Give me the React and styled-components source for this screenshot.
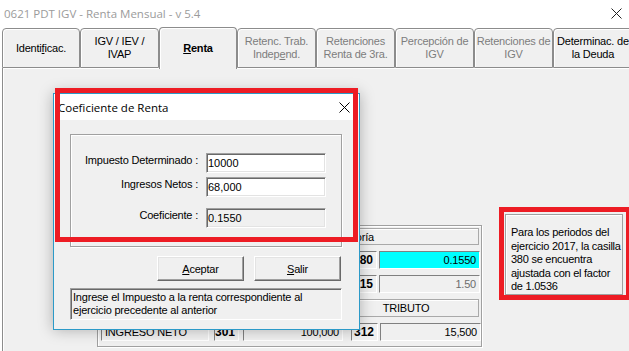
import styled, { createGlobalStyle } from 'styled-components';

const GlobalStyle = createGlobalStyle`
  html, body {
    margin: 0;
    padding: 0;
    background: #f0f0f0;
  }
  body {
    font-family: "Liberation Sans", Arial, sans-serif;
    font-size: 11px;
    letter-spacing: -0.2px;
    color: #000;
  }
`;

const tabs = [
  { w: 78, label: <>Identi<u>f</u>icac.</> },
  { w: 79, label: <>IGV / IEV /<br />IVAP</> },
  { w: 78, label: <><u>R</u>enta</>, active: true },
  { w: 79, label: <>Retenc. Trab.<br />Indep<u>e</u>nd.</>, disabled: true },
  { w: 79, label: <>Retenciones<br />Renta de 3ra.</>, disabled: true },
  { w: 79, label: <>Percepción de<br />IGV</>, disabled: true },
  { w: 79, label: <>Retenciones de<br />IGV</>, disabled: true },
  { w: 80, label: <>Determinac. de<br />la Deuda</> },
];

const infoLines = [
  'Para los periodos del',
  'ejercicio 2017, la casilla',
  '380 se encuentra',
  'ajustada con el factor',
  'de 1.0536',
];

function CloseGlyph({ color = '#000' }) {
  return (
    <svg width="11" height="11" viewBox="0 0 11 11" aria-hidden="true">
      <path d="M0.5 0.5 L10.5 10.5 M10.5 0.5 L0.5 10.5" stroke={color} strokeWidth="1" fill="none" />
    </svg>
  );
}

export default function App() {
  return (
    <>
      <GlobalStyle />
      <Window>
        <TitleBar>
          <span>0621 PDT IGV - Renta Mensual - v 5.4</span>
          <CloseGlyph color="#222" />
        </TitleBar>

        <TabStrip>
          {tabs.map((t, i) => (
            <Tab key={i} $w={t.w} $active={t.active} $disabled={t.disabled}>
              <span>{t.label}</span>
            </Tab>
          ))}
        </TabStrip>

        <TabPanel>
          <DataPanel>
            <Row $h={17}>
              <Cell $kind="head" $w={378} $ml={3} $pr={104}>Renta de Tercera Categoría</Cell>
            </Row>
            <Row $h={18}>
              <Cell $kind="label" $w={247} $ml={3} />
              <Cell $kind="code" $w={27} $ml={2}>380</Cell>
              <Cell $kind="value" $w={101} $ml={2} $bg="#00ffff">0.1550</Cell>
            </Row>
            <Row $h={18}>
              <Cell $kind="label" $w={247} $ml={3} />
              <Cell $kind="code" $w={27} $ml={2}>315</Cell>
              <Cell $kind="value" $w={101} $ml={2} $muted>1.50</Cell>
            </Row>
            <Row $h={18}>
              <Cell $kind="head" $w={240} $ml={3} />
              <Cell $kind="head" $w={129} $ml={9} $center>TRIBUTO</Cell>
            </Row>
            <Row $h={18}>
              <Cell $kind="label" $w={108} $ml={3}>INGRESO NETO</Cell>
              <Cell $kind="code" $w={25} $ml={5}>301</Cell>
              <Cell $kind="value" $w={100} $ml={4}>100,000</Cell>
              <Cell $kind="code" $w={27} $ml={8}>312</Cell>
              <Cell $kind="value" $w={101} $ml={2}>15,500</Cell>
            </Row>
          </DataPanel>

          <InfoBox>
            {infoLines.map((line) => (
              <div key={line}>{line}</div>
            ))}
          </InfoBox>
        </TabPanel>

        <Dialog>
          <DialogTitle>
            <span>Coeficiente de Renta</span>
            <CloseGlyph />
          </DialogTitle>
          <DialogBody>
            <GroupBox>
              <FieldLabel $raise>Impuesto Determinado :</FieldLabel>
              <TextBox readOnly value="10000" />
              <FieldLabel $raise>Ingresos Netos :</FieldLabel>
              <TextBox readOnly value="68,000" />
              <FieldLabel $gap>Coeficiente :</FieldLabel>
              <TextBox readOnly disabled $gap value="0.1550" />
            </GroupBox>
            <ButtonRow>
              <Button><u>A</u>ceptar</Button>
              <Button><u>S</u>alir</Button>
            </ButtonRow>
            <MessageBox>
              Ingrese el Impuesto a la renta correspondiente al ejercicio precedente al anterior
            </MessageBox>
          </DialogBody>
        </Dialog>

        <Highlight $x={55} $y={88} $w={303} $h={154} />
        <Highlight $x={499} $y={207} $w={132} $h={93} />
      </Window>
    </>
  );
}

const Window = styled.div`
  position: relative;
  width: 629px;
  height: 351px;
  overflow: hidden;
  background: #fff;
  display: flex;
  flex-direction: column;
`;

const TitleBar = styled.header`
  flex: 0 0 27px;
  display: flex;
  align-items: center;
  justify-content: space-between;
  padding: 0 7px 0 4px;
  font-family: "Open Sans", "Liberation Sans", sans-serif;
  font-size: 11.5px;
  letter-spacing: 0;
  color: #9b9b9b;
`;

const TabStrip = styled.nav`
  flex: 0 0 41px;
  display: flex;
  align-items: flex-end;
  padding-left: 2px;
  background: #fff;
  position: relative;
  z-index: 1;
`;

const Tab = styled.div`
  flex: 0 0 ${(p) => p.$w}px;
  box-sizing: border-box;
  height: ${(p) => (p.$active ? 42 : 40)}px;
  margin-bottom: ${(p) => (p.$active ? -1 : 0)}px;
  border: 1px solid #8c8c8c;
  border-bottom: ${(p) => (p.$active ? 'none' : '1px solid #8c8c8c')};
  border-radius: 4px 4px 0 0;
  background: #f0f0f0;
  box-shadow: inset 1px 1px #fff;
  display: flex;
  align-items: center;
  justify-content: center;
  text-align: center;
  white-space: nowrap;
  overflow: hidden;
  line-height: 13px;
  font-weight: ${(p) => (p.$active ? 700 : 400)};
  color: ${(p) => (p.$disabled ? '#7d7d7d' : '#000')};
`;

const TabPanel = styled.main`
  flex: 1;
  margin-left: 2px;
  border-left: 1px solid #8c8c8c;
  box-shadow: inset 1px 1px #fff;
  background: #f0f0f0;
  display: flex;
  align-items: flex-start;
`;

const DataPanel = styled.section`
  box-sizing: border-box;
  width: 385px;
  height: 122px;
  margin: 157px 0 0 94px;
  padding-top: 2px;
  border: 1px solid #a0a0a0;
  box-shadow: inset 1px 1px #fff, 1px 1px #fff;
  display: flex;
  flex-direction: column;
  gap: 6px;
`;

const Row = styled.div`
  display: flex;
  height: ${(p) => p.$h}px;
`;

const alignFor = (p) => {
  if (p.$center) return 'center';
  if (p.$kind === 'head') return p.$pr ? 'flex-end' : 'center';
  if (p.$kind === 'label') return 'flex-start';
  return 'flex-end';
};

const Cell = styled.div`
  box-sizing: border-box;
  width: ${(p) => p.$w}px;
  margin-left: ${(p) => p.$ml || 0}px;
  height: 100%;
  display: flex;
  align-items: center;
  justify-content: ${alignFor};
  overflow: hidden;
  white-space: nowrap;
  padding: 0 ${(p) => p.$pr ?? (p.$center ? 20 : 3)}px 0 3px;
  border: 1px solid;
  border-color: ${(p) => (p.$kind === 'head' ? '#a9a9a9' : '#808080 #fff #fff #808080')};
  box-shadow: ${(p) => (p.$kind === 'head' ? 'inset 1px 1px #fff' : 'none')};
  background: ${(p) => p.$bg || 'transparent'};
  color: ${(p) => (p.$muted ? '#6d6d6d' : '#000')};
  font-weight: ${(p) => (p.$kind === 'code' ? 700 : 400)};
  font-size: ${(p) => (p.$kind === 'code' ? 12 : 11)}px;
  letter-spacing: ${(p) => (p.$kind === 'code' ? 0 : -0.2)}px;
`;

const InfoBox = styled.aside`
  box-sizing: border-box;
  width: 118px;
  height: 81px;
  margin: 146px 0 0 23px;
  padding: 11px 0 0 5px;
  border: 1px solid #a0a0a0;
  box-shadow: inset 1px 1px #fff;
  line-height: 13.5px;
  white-space: nowrap;
  letter-spacing: -0.25px;
`;

const Dialog = styled.div`
  position: absolute;
  left: 53px;
  top: 93px;
  width: 307px;
  height: 237px;
  box-sizing: border-box;
  border: 1px solid #2b9ac8;
  background: #f0f0f0;
  box-shadow: 0 0 14px rgba(0, 0, 0, 0.28);
  display: flex;
  flex-direction: column;
  z-index: 2;
`;

const DialogTitle = styled.div`
  flex: 0 0 26px;
  background: #fff;
  display: flex;
  align-items: center;
  justify-content: space-between;
  padding: 0 9px 0 4px;
  font-family: "Open Sans", "Liberation Sans", sans-serif;
  font-size: 11.5px;
  letter-spacing: 0;
`;

const DialogBody = styled.div`
  flex: 1;
  padding: 14px 16px 0 16px;
  display: flex;
  flex-direction: column;
`;

const GroupBox = styled.fieldset`
  box-sizing: border-box;
  margin: 0;
  width: 272px;
  height: 113px;
  padding: 18px 0 0 0;
  border: 1px solid #a0a0a0;
  box-shadow: inset 1px 1px #fff, 1px 1px #fff;
  display: grid;
  grid-template-columns: 130px 120px;
  grid-auto-rows: 20px;
  column-gap: 5px;
  row-gap: 4px;
  align-content: start;
`;

const FieldLabel = styled.label`
  text-align: right;
  padding-right: 3px;
  align-self: center;
  margin-top: ${(p) => (p.$gap ? 7 : 0)}px;
  transform: translateY(${(p) => (p.$raise ? -3 : 0)}px);
`;

const TextBox = styled.input`
  box-sizing: border-box;
  height: 20px;
  margin: ${(p) => (p.$gap ? 7 : 0)}px 0 0 0;
  padding: 0 0 0 1px;
  border: 1px solid;
  border-color: #a0a0a0 #fff #fff #a0a0a0;
  box-shadow: inset 1px 1px #696969, inset -1px -1px #e3e3e3;
  background: ${(p) => (p.disabled ? '#f0f0f0' : '#fff')};
  font-family: "Liberation Sans", Arial, sans-serif;
  font-size: 11px;
  color: #000;
  -webkit-text-fill-color: #000;
  outline: none;
`;

const ButtonRow = styled.div`
  display: flex;
  justify-content: flex-end;
  gap: 10px;
  width: 272px;
  padding-right: 1px;
  box-sizing: border-box;
  margin-top: 9px;
`;

const Button = styled.button`
  box-sizing: border-box;
  width: 87px;
  height: 25px;
  padding: 0;
  border: 1px solid;
  border-color: #fff #696969 #696969 #fff;
  box-shadow: inset -1px -1px #a0a0a0, inset 1px 1px #e3e3e3;
  background: #f0f0f0;
  font-family: "Liberation Sans", Arial, sans-serif;
  font-size: 11px;
  letter-spacing: -0.2px;
  color: #000;
`;

const MessageBox = styled.div`
  box-sizing: border-box;
  width: 272px;
  height: 32px;
  margin-top: 7px;
  padding: 2px 2px 0 2px;
  border: 1px solid;
  border-color: #a0a0a0 #fff #fff #a0a0a0;
  box-shadow: inset 1px 1px #696969;
  line-height: 13px;
`;

const Highlight = styled.div`
  position: absolute;
  left: ${(p) => p.$x}px;
  top: ${(p) => p.$y}px;
  width: ${(p) => p.$w}px;
  height: ${(p) => p.$h}px;
  box-sizing: border-box;
  border: 5px solid #ed1c24;
  pointer-events: none;
  z-index: 3;
`;
